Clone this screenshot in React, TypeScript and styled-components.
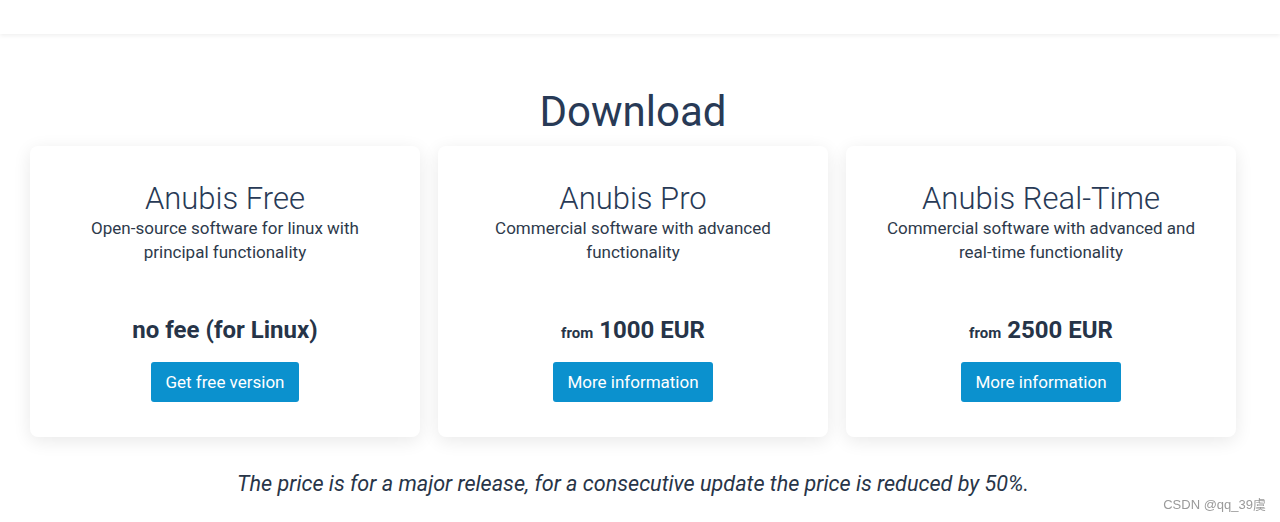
import { createGlobalStyle, styled } from 'styled-components';

const GlobalStyle = createGlobalStyle`
  html, body {
    margin: 0;
    padding: 0;
    background: #fff;
    font-family: Roboto, 'Liberation Sans', Arial, sans-serif;
    color: #293a55;
  }
  * { box-sizing: border-box; }
`;

const TopBar = styled.header`
  height: 34px;
  background: #fff;
  box-shadow: 0 2px 4px rgba(0, 0, 0, 0.06);
`;

const Main = styled.main`
  width: 1266px;
  padding: 0 30px;
  text-align: center;
`;

const Heading = styled.h2`
  margin: 50px 0 0;
  font-size: 42px;
  font-weight: 400;
  line-height: 56px;
  color: #283a56;
`;

const CardGrid = styled.div`
  display: grid;
  grid-template-columns: repeat(3, 1fr);
  gap: 18px;
  margin-top: 6px;
`;

const Card = styled.section`
  height: 291px;
  background: #fff;
  border-radius: 8px;
  box-shadow: 0 4px 18px rgba(0, 0, 0, 0.09);
  padding: 36px 40px 0;
  display: flex;
  flex-direction: column;
  align-items: center;
`;

const CardTitle = styled.h3`
  margin: 0;
  font-size: 31px;
  font-weight: 300;
  line-height: 34px;
  color: #283a56;
`;

const Description = styled.p`
  margin: 0;
  font-size: 17px;
  line-height: 24px;
  color: #2e3a4b;
`;

const Price = styled.div`
  margin-top: 51px;
  height: 30px;
  font-size: 24px;
  font-weight: 700;
  line-height: 30px;
  color: #263448;
`;

const From = styled.span`
  font-size: 15px;
  margin-right: 6px;
`;

const Button = styled.a`
  margin-top: 17px;
  display: inline-block;
  height: 40px;
  line-height: 40px;
  padding: 0 14px;
  background: #0b91ce;
  color: #fff;
  font-size: 17px;
  border-radius: 3px;
  text-decoration: none;
`;

const Note = styled.p`
  margin: 34px 0 0;
  font-size: 21.6px;
  font-style: italic;
  line-height: 26px;
  color: #283548;
`;

const Watermark = styled.div`
  position: fixed;
  right: 14px;
  bottom: 9px;
  font-family: 'Liberation Sans', 'Noto Sans CJK SC', sans-serif;
  font-size: 13px;
  color: #9a9a9a;
`;

const plans = [
  {
    name: 'Anubis Free',
    desc: ['Open-source software for linux with', 'principal functionality'],
    from: false,
    price: 'no fee (for Linux)',
    action: 'Get free version',
  },
  {
    name: 'Anubis Pro',
    desc: ['Commercial software with advanced', 'functionality'],
    from: true,
    price: '1000 EUR',
    action: 'More information',
  },
  {
    name: 'Anubis Real-Time',
    desc: ['Commercial software with advanced and', 'real-time functionality'],
    from: true,
    price: '2500 EUR',
    action: 'More information',
  },
];

export default function App() {
  return (
    <>
      <GlobalStyle />
      <TopBar />
      <Main>
        <Heading>Download</Heading>
        <CardGrid>
          {plans.map((p) => (
            <Card key={p.name}>
              <CardTitle>{p.name}</CardTitle>
              <Description>
                {p.desc[0]}
                <br />
                {p.desc[1]}
              </Description>
              <Price>
                {p.from && <From>from</From>}
                {p.price}
              </Price>
              <Button href="#">{p.action}</Button>
            </Card>
          ))}
        </CardGrid>
        <Note>The price is for a major release, for a consecutive update the price is reduced by 50%.</Note>
      </Main>
      <Watermark>CSDN @qq_39虞</Watermark>
    </>
  );
}
